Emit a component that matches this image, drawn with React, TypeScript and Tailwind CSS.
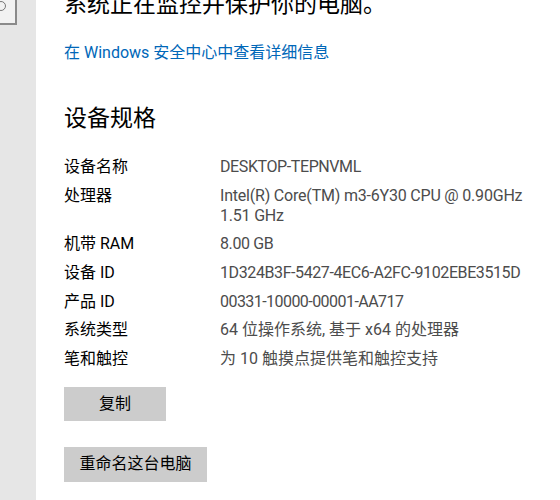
const rows: { label: string; value: string[]; tight?: string }[] = [
  { label: '设备名称', value: ['DESKTOP-TEPNVML'], tight: 'tracking-[-0.4px]' },
  {
    label: '处理器',
    value: ['Intel(R) Core(TM) m3-6Y30 CPU @ 0.90GHz', '1.51 GHz'],
    tight: 'tracking-[-0.2px]',
  },
  { label: '机带 RAM', value: ['8.00 GB'], tight: 'tracking-[-0.4px]' },
  { label: '设备 ID', value: ['1D324B3F-5427-4EC6-A2FC-9102EBE3515D'], tight: 'tracking-[-0.4px]' },
  { label: '产品 ID', value: ['00331-10000-00001-AA717'], tight: 'tracking-[-0.55px]' },
  { label: '系统类型', value: ['64 位操作系统, 基于 x64 的处理器'] },
  { label: '笔和触控', value: ['为 10 触摸点提供笔和触控支持'] },
];

export default function App() {
  return (
    <div
      className="flex w-[560px] h-[500px] overflow-hidden bg-white"
      style={{ fontFamily: 'Roboto, "Noto Sans CJK SC", sans-serif' }}
    >
      <div className="w-[36px] shrink-0 bg-[#e6e6e6]">
        <div className="relative w-[17px] h-[25px] overflow-hidden border-r-2 border-b-2 border-[#8a8a8a] bg-[#f2f2f2]">
          <div className="absolute -left-[4px] top-[1px] w-[10px] h-[10px] rounded-full border border-[#777]" />
        </div>
      </div>

      <div className="flex-1 pl-[28px]">
        <p className="-mt-[9px] text-[23px] leading-[28px] text-black whitespace-nowrap">
          系统正在监控并保护你的电脑。
        </p>
        <p className="mt-[23px] text-[16px] leading-[22px] text-[#0067b8]">
          在 Windows 安全中心中查看详细信息
        </p>

        <h2 className="mt-[39px] text-[23px] leading-[32px] text-black">设备规格</h2>

        <div className="mt-[22px] flex flex-col gap-[8.67px] text-[16px] leading-[20px]">
          {rows.map((r) => (
            <div key={r.label} className="flex">
              <div className="w-[156px] shrink-0 text-black">{r.label}</div>
              <div className={`text-[#4c4c4c] whitespace-nowrap ${r.tight ?? ''}`}>
                {r.value.map((v) => (
                  <div key={v}>{v}</div>
                ))}
              </div>
            </div>
          ))}
        </div>

        <button className="mt-[18px] block w-[102px] h-[34px] bg-[#cccccc] text-[16px] text-black">
          复制
        </button>
        <button className="mt-[26px] block w-[143px] h-[35px] bg-[#cccccc] text-[16px] text-black">
          重命名这台电脑
        </button>
      </div>
    </div>
  );
}
